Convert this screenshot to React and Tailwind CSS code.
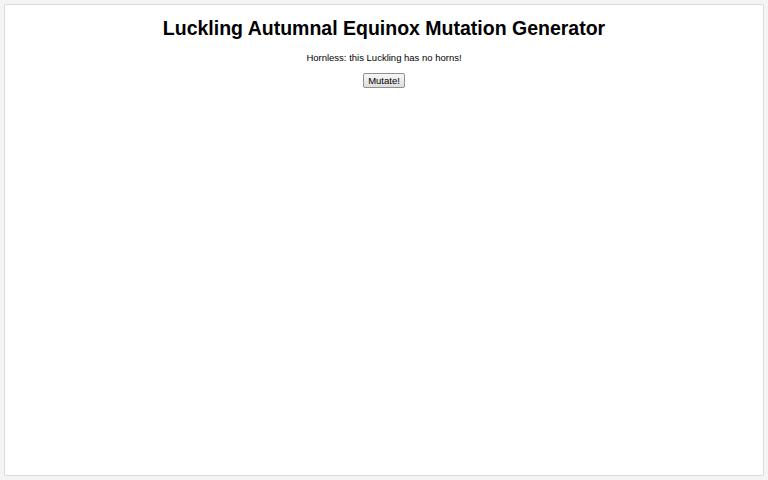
export default function App() {
  return (
    <div className="w-[768px] h-[480px] bg-[#f4f4f4] p-[4px] box-border" style={{ fontFamily: '"Liberation Sans", Arial, sans-serif' }}>
      <div className="h-full bg-white border border-[#dcdcdc] flex flex-col items-center">
        <h1 className="mt-[13px] text-[19.5px] leading-[20px] font-bold text-black">Luckling Autumnal Equinox Mutation Generator</h1>
        <p className="mt-[14px] text-[9.5px] leading-[12px] text-black">Hornless: this Luckling has no horns!</p>
        <button className="mt-[9px] h-[15px] px-[4px] text-[9.5px] leading-[11px] text-black border border-[#8f8f8f] rounded-[2px] bg-gradient-to-b from-[#f6f6f6] to-[#dedede]">Mutate!</button>
      </div>
    </div>
  );
}
